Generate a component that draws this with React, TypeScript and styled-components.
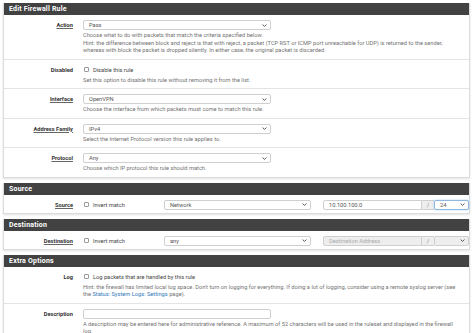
import * as React from 'react'
import styled, { createGlobalStyle } from 'styled-components'

const Global = createGlobalStyle`
  html, body {
    margin: 0;
    padding: 0;
    background: #fff;
  }
  body {
    font-family: Roboto, "Liberation Sans", sans-serif;
    font-size: 5.7px;
    color: #333;
  }
`

const Page = styled.div`
  width: 474px;
  padding: 3px 4px 0 3px;
  box-sizing: border-box;
`

const Panel = styled.section`
  border: 1px solid #dcdcdc;
  border-top: none;
  margin-bottom: 5px;
  box-shadow: 0 1px 2px rgba(0, 0, 0, 0.12);
  background: #fff;
`

const Heading = styled.h2`
  margin: 0;
  height: 12px;
  line-height: 12px;
  padding-left: 5px;
  background: #424242;
  color: #fff;
  font-size: 7px;
  font-weight: 700;
  letter-spacing: 0.2px;
`

const Row = styled.div<{ $tight?: boolean }>`
  display: flex;
  padding: 5px 0 ${p => (p.$tight ? '3px' : '4px')};
  & + & {
    border-top: 1px solid #e4e4e4;
  }
`

const Label = styled.div<{ $hint?: boolean }>`
  width: 79px;
  flex: none;
  box-sizing: border-box;
  padding-right: 10px;
  text-align: right;
  font-weight: 700;
  line-height: 10px;
  color: #333;
  text-decoration: ${p => (p.$hint ? 'underline' : 'none')};
  text-decoration-color: #666;
  text-underline-offset: 1px;
`

const Field = styled.div`
  flex: 1;
  min-width: 0;
`

const Line = styled.div`
  display: flex;
  align-items: center;
  height: 10px;
`

const Help = styled.div`
  margin-top: 2px;
  line-height: 7.5px;
  color: #737373;
  white-space: nowrap;
`

const Link = styled.span`
  color: #337ab7;
`

const SelectBox = styled.div<{ $w: number; $focus?: boolean; $muted?: boolean }>`
  width: ${p => p.$w}px;
  height: 10px;
  box-sizing: border-box;
  flex: none;
  display: flex;
  align-items: center;
  justify-content: space-between;
  padding: 0 3px 0 5px;
  border: 1px solid ${p => (p.$focus ? '#8fb8e0' : '#cfcfcf')};
  border-radius: 2px;
  background: ${p => (p.$muted ? '#eeeeee' : '#fff')};
  box-shadow: ${p => (p.$focus ? '0 0 2px rgba(102,175,233,.6)' : 'none')};
  color: #555;
`

const Chevron = () => (
  <svg width="5" height="3" viewBox="0 0 5 3">
    <path d="M0.6 0.5 L2.5 2.4 L4.4 0.5" fill="none" stroke="#444" strokeWidth="0.9" />
  </svg>
)

const Select = ({ w, value, focus, muted }: { w: number; value?: string; focus?: boolean; muted?: boolean }) => (
  <SelectBox $w={w} $focus={focus} $muted={muted}>
    <span>{value}</span>
    <Chevron />
  </SelectBox>
)

const Box = styled.span`
  width: 5px;
  height: 5px;
  box-sizing: border-box;
  border: 1px solid #9a9a9a;
  border-radius: 1px;
  margin: 0 4px 0 1px;
  flex: none;
  background: #fff;
`

const CheckText = styled.span`
  color: #444;
  white-space: nowrap;
`

const Check = styled.div`
  display: flex;
  align-items: center;
  width: 81px;
  flex: none;
`

const Group = styled.div`
  display: flex;
  margin-left: 12px;
  width: 147px;
  height: 10px;
`

const Input = styled.div<{ $w?: number; $muted?: boolean }>`
  width: ${p => (p.$w ? `${p.$w}px` : 'auto')};
  flex: ${p => (p.$w ? 'none' : '1')};
  height: 10px;
  box-sizing: border-box;
  display: flex;
  align-items: center;
  padding-left: 5px;
  border: 1px solid #cfcfcf;
  border-radius: 2px 0 0 2px;
  background: ${p => (p.$muted ? '#eeeeee' : '#fff')};
  color: ${p => (p.$muted ? '#aaa' : '#555')};
`

const TextInput = styled(Input)`
  border-radius: 2px;
`

const Addon = styled.div`
  width: 12px;
  flex: none;
  box-sizing: border-box;
  border: 1px solid #cfcfcf;
  border-left: none;
  border-right: none;
  background: #eeeeee;
  color: #888;
  display: flex;
  align-items: center;
  justify-content: center;
`

export default function App() {
  return (
    <Page>
      <Global />
      <Panel>
        <Heading>Edit Firewall Rule</Heading>
        <Row>
          <Label $hint>Action</Label>
          <Field>
            <Select w={188} value="Pass" />
            <Help>
              Choose what to do with packets that match the criteria specified below.
              <br />
              Hint: the difference between block and reject is that with reject, a packet (TCP RST or ICMP port unreachable for UDP) is returned to the sender,
              <br />
              whereas with block the packet is dropped silently. In either case, the original packet is discarded.
            </Help>
          </Field>
        </Row>
        <Row>
          <Label>Disabled</Label>
          <Field>
            <Line>
              <Box />
              <CheckText>Disable this rule</CheckText>
            </Line>
            <Help>Set this option to disable this rule without removing it from the list.</Help>
          </Field>
        </Row>
        <Row>
          <Label $hint>Interface</Label>
          <Field>
            <Select w={188} value="OpenVPN" />
            <Help>Choose the interface from which packets must come to match this rule.</Help>
          </Field>
        </Row>
        <Row>
          <Label $hint>Address Family</Label>
          <Field>
            <Select w={188} value="IPv4" />
            <Help>Select the Internet Protocol version this rule applies to.</Help>
          </Field>
        </Row>
        <Row>
          <Label $hint>Protocol</Label>
          <Field>
            <Select w={188} value="Any" />
            <Help>Choose which IP protocol this rule should match.</Help>
          </Field>
        </Row>
      </Panel>

      <Panel>
        <Heading>Source</Heading>
        <Row $tight>
          <Label $hint>Source</Label>
          <Field>
            <Line>
              <Check>
                <Box />
                <CheckText>Invert match</CheckText>
              </Check>
              <Select w={147} value="Network" />
              <Group>
                <Input>10.100.100.0</Input>
                <Addon>/</Addon>
                <Select w={35} value="24" focus />
              </Group>
            </Line>
          </Field>
        </Row>
      </Panel>

      <Panel>
        <Heading>Destination</Heading>
        <Row $tight>
          <Label $hint>Destination</Label>
          <Field>
            <Line>
              <Check>
                <Box />
                <CheckText>Invert match</CheckText>
              </Check>
              <Select w={147} value="any" />
              <Group>
                <Input $muted>Destination Address</Input>
                <Addon>/</Addon>
                <Select w={35} muted />
              </Group>
            </Line>
          </Field>
        </Row>
      </Panel>

      <Panel>
        <Heading>Extra Options</Heading>
        <Row>
          <Label>Log</Label>
          <Field>
            <Line>
              <Box />
              <CheckText>Log packets that are handled by this rule</CheckText>
            </Line>
            <Help>
              Hint: the firewall has limited local log space. Don't turn on logging for everything. If doing a lot of logging, consider using a remote syslog server (see
              <br />
              the <Link>Status: System Logs: Settings</Link> page).
            </Help>
          </Field>
        </Row>
        <Row>
          <Label>Description</Label>
          <Field>
            <TextInput $w={188} />
            <Help>
              A description may be entered here for administrative reference. A maximum of 52 characters will be used in the ruleset and displayed in the firewall
              <br />
              log.
            </Help>
          </Field>
        </Row>
      </Panel>
    </Page>
  )
}
